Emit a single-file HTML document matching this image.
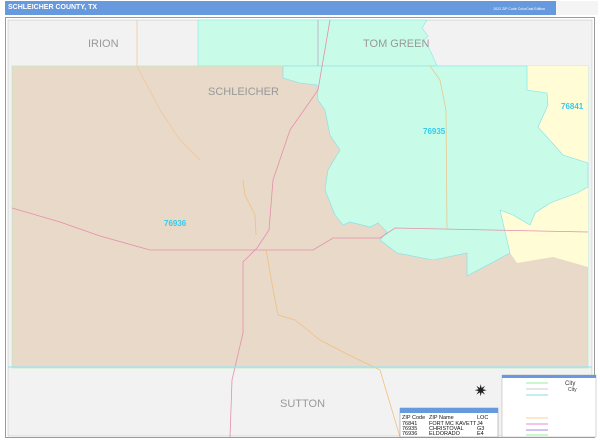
<!DOCTYPE html>
<html><head><meta charset="utf-8"><style>
body{margin:0;width:600px;height:440px;overflow:hidden;background:#fff;font-family:"Liberation Sans",sans-serif}
.hdr{position:absolute;left:5px;top:1px;width:575px;height:14px;background:#6699dd;color:#fff;font-size:7px;font-weight:bold}
</style></head><body>
<div class="hdr"><span style="position:absolute;left:3px;top:3px">SCHLEICHER COUNTY, TX</span><span style="position:absolute;right:35px;top:6px;font-size:3.5px;font-weight:normal">2022 ZIP Code ColorCast Edition</span></div>
<div style="position:absolute;left:556px;top:1px;width:42px;height:14px;background:#f4f4f4"></div>
<svg width="600" height="440" style="position:absolute;left:0;top:0">
<rect x="5.5" y="17.5" width="589" height="420" fill="#fff" stroke="#999"/>
<rect x="8" y="20" width="584" height="416" fill="#f2f2f2" stroke="#bbb" stroke-width="0.5"/>
<polygon points="198,20 427,20 422,28 428,36 424,40 430,50 437,66 198,66" fill="#c8fbe8" stroke="#8de4e8" stroke-width="0.6"/>
<rect x="12" y="66" width="576" height="302" fill="#e8d9c8" stroke="#aeb" stroke-width="0.6"/>
<polygon points="500,210 588,188 588,267 553,257 517,263 510,253" fill="#fffcd6"/>
<rect x="527" y="66" width="61" height="125" fill="#fffcd6"/>
<polygon points="283,66 527,66 527,90 547,93 548,105 538,127 563,155 588,163 588,187 577,193 550,203 535,213 530,225 513,215 500,210 510,253 497,260 467,276 467,253 433,260 397,253 380,240 387,232 378,223 370,227 350,222 343,225 335,215 325,190 328,170 340,150 330,135 325,110 318,100 317,85 300,83 283,78" fill="#c8fbe8" stroke="#7fe0ec" stroke-width="0.6"/>
<g fill="none" stroke-width="0.8">
<path d="M12,208 L60,222 L100,236 L150,250 L313,250 L333,238 L380,238 L395,228 L588,232" stroke="#e58fae"/>
<path d="M257,248 L269,230 L273,180 L290,130 L318,90 L330,20" stroke="#e58fae"/>
<path d="M257,248 L243,262 L243,333 L232,380 L230,437" stroke="#e58fae"/>
<path d="M266,250 L275,300 L278,315 L295,320 L320,340 L345,353 L380,370 L400,437" stroke="#f0c080"/>
<path d="M243,180 L245,195 L255,215 L256,235" stroke="#f0c080"/>
<path d="M137,20 L137,66 L160,110 L180,140 L200,160" stroke="#f0c8a0"/>
<path d="M430,66 L440,80 L446,110 L447,230" stroke="#e8c890"/>
<path d="M318,20 L318,66" stroke="#b8a8c0"/>
</g>
<rect x="8" y="366" width="584" height="2" fill="#9ee4ee" opacity="0.6"/>
<g font-family="Liberation Sans" fill="#999" font-size="11">
<text x="88" y="47">IRION</text><text x="363" y="47">TOM GREEN</text>
<text x="208" y="95">SCHLEICHER</text><text x="280" y="407">SUTTON</text>
</g>
<g font-family="Liberation Sans" fill="#33ccee" font-size="8" font-weight="bold">
<text x="164" y="226">76936</text><text x="423" y="134">76935</text><text x="561" y="109">76841</text>
</g>
<text x="474" y="396" font-size="16" fill="#222">✷</text>
<rect x="502" y="375" width="94" height="62" fill="#fff" stroke="#aaa" stroke-width="0.5"/>
<rect x="502" y="375" width="94" height="3" fill="#6699dd"/>
<g stroke-width="1"><line x1="526" y1="383" x2="548" y2="383" stroke="#9e9"/><line x1="526" y1="389" x2="548" y2="389" stroke="#ccc"/><line x1="526" y1="395" x2="548" y2="395" stroke="#8de"/><line x1="526" y1="418" x2="548" y2="418" stroke="#fc9"/><line x1="526" y1="424" x2="548" y2="424" stroke="#e8c"/><line x1="526" y1="430" x2="548" y2="430" stroke="#a8e"/><line x1="526" y1="435" x2="548" y2="435" stroke="#9e9"/></g>
<text x="565" y="385" font-size="6" fill="#333">City</text><text x="568" y="391" font-size="5" fill="#333">City</text>
<rect x="400" y="408" width="98" height="29" fill="#fff" stroke="#889" stroke-width="0.5"/>
<rect x="400" y="408" width="98" height="5" fill="#6699dd"/>
<g font-size="5.5" fill="#111" font-family="Liberation Sans">
<text x="402" y="419">ZIP Code</text><text x="429" y="419">ZIP Name</text><text x="477" y="419">LOC</text>
<text x="402" y="425">76841</text><text x="429" y="425">FORT MC KAVETT</text><text x="477" y="425">J4</text>
<text x="402" y="430">76935</text><text x="429" y="430">CHRISTOVAL</text><text x="477" y="430">G3</text>
<text x="402" y="435">76936</text><text x="429" y="435">ELDORADO</text><text x="477" y="435">E4</text>
</g>
</svg>
</body></html>
